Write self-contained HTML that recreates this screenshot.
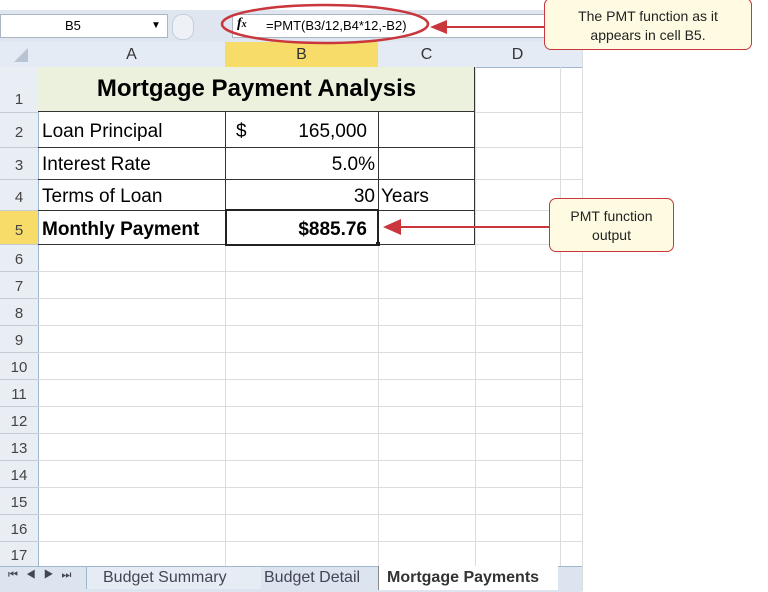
<!DOCTYPE html>
<html><head><style>
body{margin:0;width:768px;height:591px;background:#fff;position:relative;overflow:hidden;font-family:"Liberation Sans",sans-serif}
.a{position:absolute}
.hl{position:absolute;background:#dadcdd;height:1px}
.vl{position:absolute;background:#dadcdd;width:1px}
.rh{position:absolute;left:0;width:38px;text-align:center;color:#444;font-size:15px;background:#e9eef5;border-bottom:1px solid #c5cbd3}
.ch{position:absolute;top:42px;height:25px;line-height:25px;text-align:center;font-size:16px;color:#333;background:#e4ebf5;border-right:1px solid #c5cbd3}
.t{position:absolute;font-size:19px;color:#000;white-space:nowrap}
.callout{position:absolute;background:#fffbe3;border:1.5px solid #c9363c;border-radius:7px;text-align:center;font-size:14px;color:#222;box-sizing:border-box}
</style></head><body>
<div class="a" style="left:0;top:10px;width:582px;height:32px;background:#dfe6ef"></div>
<div class="a" style="left:0;top:14px;width:168px;height:24px;background:#fff;border:1px solid #aab4c2;box-sizing:border-box;font-size:13px;line-height:22px"><span style="position:absolute;left:64px">B5</span><span style="position:absolute;left:150px;font-size:10px">▼</span></div>
<div class="a" style="left:172px;top:14px;width:20px;height:24px;border:1px solid #c5cfdb;border-radius:10px;background:#eef2f7"></div>
<div class="a" style="left:232px;top:14px;width:350px;height:24px;background:#fff;border:1px solid #aab4c2;box-sizing:border-box"></div>
<div class="a" style="left:237px;top:16px;font-family:'Liberation Serif',serif;font-style:italic;font-weight:bold;font-size:14px">f<span style="font-size:10px">x</span></div>
<div class="a" style="left:266px;top:18px;font-size:13px">=PMT(B3/12,B4*12,-B2)</div>
<div class="a" style="left:0;top:42px;width:582px;height:25px;background:#e4ebf5;border-bottom:1px solid #9eb6ce"></div>
<div class="ch" style="left:0;width:38px"><svg width="22" height="18" style="margin-top:4px"><polygon points="20,2 20,16 6,16" fill="#b8c4d2"/></svg></div>
<div class="ch" style="left:38px;width:187px">A</div>
<div class="ch" style="left:225px;width:153px;background:#f8dc6a">B</div>
<div class="ch" style="left:378px;width:97px">C</div>
<div class="ch" style="left:475px;width:85px">D</div>
<div class="ch" style="left:560px;width:22px"></div>
<div class="a" style="left:0;top:67px;width:38px;height:500px;background:#e9eef5;border-right:1px solid #9eb6ce"></div>
<div class="rh" style="top:67px;height:45px;line-height:66px">1</div>
<div class="rh" style="top:113px;height:34px;line-height:40px">2</div>
<div class="rh" style="top:148px;height:31px;line-height:36px">3</div>
<div class="rh" style="top:180px;height:30px;line-height:36px">4</div>
<div class="rh" style="top:211px;height:33px;line-height:40px;background:#f8dc6a">5</div>
<div class="rh" style="top:245px;height:26px;line-height:30px">6</div>
<div class="rh" style="top:272px;height:26px;line-height:30px">7</div>
<div class="rh" style="top:299px;height:26px;line-height:30px">8</div>
<div class="rh" style="top:326px;height:26px;line-height:30px">9</div>
<div class="rh" style="top:353px;height:26px;line-height:30px">10</div>
<div class="rh" style="top:380px;height:26px;line-height:30px">11</div>
<div class="rh" style="top:407px;height:26px;line-height:30px">12</div>
<div class="rh" style="top:434px;height:26px;line-height:30px">13</div>
<div class="rh" style="top:461px;height:26px;line-height:30px">14</div>
<div class="rh" style="top:488px;height:26px;line-height:30px">15</div>
<div class="rh" style="top:515px;height:26px;line-height:30px">16</div>
<div class="rh" style="top:542px;height:24px;line-height:28px">17</div>
<div class="vl" style="left:225px;top:245px;height:321px"></div>
<div class="vl" style="left:378px;top:245px;height:321px"></div>
<div class="vl" style="left:475px;top:67px;height:499px"></div>
<div class="vl" style="left:560px;top:67px;height:499px"></div>
<div class="vl" style="left:582px;top:42px;height:549px"></div>
<div class="hl" style="left:38px;top:271px;width:544px"></div>
<div class="hl" style="left:38px;top:298px;width:544px"></div>
<div class="hl" style="left:38px;top:325px;width:544px"></div>
<div class="hl" style="left:38px;top:352px;width:544px"></div>
<div class="hl" style="left:38px;top:379px;width:544px"></div>
<div class="hl" style="left:38px;top:406px;width:544px"></div>
<div class="hl" style="left:38px;top:433px;width:544px"></div>
<div class="hl" style="left:38px;top:460px;width:544px"></div>
<div class="hl" style="left:38px;top:487px;width:544px"></div>
<div class="hl" style="left:38px;top:514px;width:544px"></div>
<div class="hl" style="left:38px;top:541px;width:544px"></div>
<div class="hl" style="left:475px;top:112px;width:107px"></div>
<div class="hl" style="left:475px;top:147px;width:107px"></div>
<div class="hl" style="left:475px;top:179px;width:107px"></div>
<div class="hl" style="left:475px;top:210px;width:107px"></div>
<div class="hl" style="left:475px;top:244px;width:107px"></div>
<div class="a" style="left:38px;top:67px;width:437px;height:45px;background:#ebf1dd;border-bottom:1px solid #333;border-right:1px solid #333;box-sizing:border-box"></div>
<div class="t" style="left:38px;top:75px;width:437px;text-align:center;font-weight:bold;font-size:24px">Mortgage Payment Analysis</div>
<svg class="a" style="left:38px;top:112px" width="440" height="134"><g stroke="#333" stroke-width="1" fill="none">
<line x1="0" y1="35.5" x2="437" y2="35.5"/><line x1="0" y1="67.5" x2="437" y2="67.5"/><line x1="0" y1="98.5" x2="437" y2="98.5"/><line x1="0" y1="132.5" x2="437" y2="132.5"/>
<line x1="187.5" y1="0" x2="187.5" y2="133"/><line x1="340.5" y1="0" x2="340.5" y2="133"/><line x1="436.5" y1="0" x2="436.5" y2="133"/></g>
<rect x="188" y="98" width="152" height="35" fill="none" stroke="#222" stroke-width="2"/><rect x="338" y="130" width="4" height="4" fill="#222"/></svg>
<div class="t" style="left:42px;top:121px">Loan Principal</div>
<div class="t" style="left:236px;top:121px">$</div>
<div class="t" style="left:280px;top:121px;width:87px;text-align:right">165,000</div>
<div class="t" style="left:42px;top:154px">Interest Rate</div>
<div class="t" style="left:280px;top:154px;width:95px;text-align:right">5.0%</div>
<div class="t" style="left:42px;top:186px">Terms of Loan</div>
<div class="t" style="left:280px;top:186px;width:95px;text-align:right">30</div>
<div class="t" style="left:381px;top:186px">Years</div>
<div class="t" style="left:42px;top:219px;font-weight:bold">Monthly Payment</div>
<div class="t" style="left:260px;top:219px;width:107px;text-align:right;font-weight:bold">$885.76</div>
<div class="a" style="left:0;top:566px;width:582px;height:25px;background:#dbe4ef;border-top:1px solid #9eb6ce"></div>
<div class="a" style="left:8px;top:569px;font-size:11px;color:#445;letter-spacing:8px">⏮◀▶⏭</div>
<div class="a" style="left:86px;top:567px;width:175px;height:22px;background:#e6ecf4;border-left:1px solid #9eb6ce;font-size:16px;color:#445;line-height:21px;padding-left:16px;box-sizing:border-box">Budget Summary</div>
<div class="a" style="left:262px;top:567px;width:115px;height:22px;font-size:16px;color:#445;line-height:21px;padding-left:2px">Budget Detail</div>
<div class="a" style="left:378px;top:566px;width:180px;height:24px;background:#fff;border-left:1px solid #888;font-size:16px;font-weight:bold;color:#333;line-height:23px;padding-left:8px;box-sizing:border-box">Mortgage Payments</div>
<svg class="a" style="left:0;top:0" width="768" height="591">
<ellipse cx="325" cy="24" rx="103" ry="19" fill="none" stroke="#c9363c" stroke-width="2.5"/>
<line x1="445" y1="27" x2="545" y2="27" stroke="#c9363c" stroke-width="2"/>
<polygon points="430,27 447,20 447,34" fill="#c9363c"/>
<line x1="400" y1="227" x2="550" y2="227" stroke="#c9363c" stroke-width="2"/>
<polygon points="383,227 401,219 401,235" fill="#c9363c"/>
</svg>
<div class="callout" style="left:544px;top:-2px;width:208px;height:52px;padding-top:8px;line-height:19px">The PMT function as it<br>appears in cell B5.</div>
<div class="callout" style="left:549px;top:198px;width:125px;height:54px;padding-top:8px;line-height:19px">PMT function<br>output</div>
</body></html>
